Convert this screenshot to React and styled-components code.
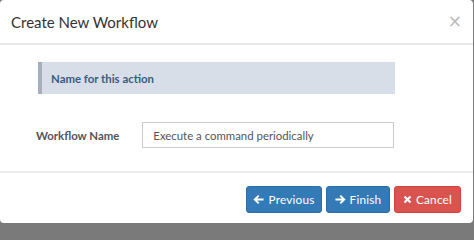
import React from "react";
import styled, { createGlobalStyle } from "styled-components";

const Global = createGlobalStyle`
  html, body { margin: 0; padding: 0; background: #7a7a7a; }
  body { width: 474px; height: 225px; overflow: hidden; font-family: Lato, "Open Sans", sans-serif; }
`;

const Modal = styled.div`
  width: 473px;
  height: 223px;
  background: #fff;
  border-radius: 4px;
  display: flex;
  flex-direction: column;
  box-sizing: border-box;
`;

const Header = styled.div`
  height: 45px;
  box-sizing: border-box;
  border-bottom: 2px solid #e8e8e8;
  display: flex;
  align-items: center;
  justify-content: space-between;
  padding: 0 11px 0 11px;
`;

const Title = styled.h4`
  margin: 0;
  font-size: 15px;
  font-weight: 400;
  color: #333;
`;

const Close = styled.span`
  font-size: 17px;
  color: #bbb;
  line-height: 1;
  font-family: "DejaVu Sans", sans-serif;
`;

const Body = styled.div`
  flex: 1;
  padding: 17px 78px 0 38px;
  border-bottom: 2px solid #ececec;
`;

const Alert = styled.div`
  height: 32px;
  box-sizing: border-box;
  background: #d8dee7;
  border-left: 4px solid #a5afbd;
  display: flex;
  align-items: center;
  padding-left: 9px;
  font-size: 11.4px;
  font-weight: 700;
  color: #3c5a80;
`;

const FormRow = styled.div`
  display: flex;
  align-items: center;
  margin-top: 28px;
  margin-left: -2px;
`;

const Label = styled.label`
  flex: 0 0 82px;
  white-space: nowrap;
  text-align: right;
  font-size: 11.4px;
  font-weight: 700;
  color: #555;
`;

const Input = styled.div`
  flex: 0 0 252px;
  margin-left: 23px;
  height: 26px;
  box-sizing: border-box;
  border: 1px solid #ccc;
  display: flex;
  align-items: center;
  padding-left: 10px;
  font-size: 11.4px;
  color: #555;
`;

const Footer = styled.div`
  height: 50px;
  display: flex;
  justify-content: flex-end;
  align-items: flex-start;
  padding: 13px 12px 0 0;
  box-sizing: border-box;
  gap: 4px;
`;

const Button = styled.button`
  height: 27px;
  width: ${(p) => p.w}px;
  border: 1px solid ${(p) => (p.danger ? "#d43f3a" : "#2e6da4")};
  background: ${(p) => (p.danger ? "#d9534f" : "#337ab7")};
  color: #fff;
  border-radius: 3px;
  font-family: Lato, "Open Sans", sans-serif;
  font-size: 11.8px;
  letter-spacing: 0.2px;
  display: flex;
  align-items: center;
  justify-content: center;
  gap: 4px;
  padding: 0;
`;

const Icon = styled.svg`
  width: ${(p) => p.size || 11}px;
  height: ${(p) => p.size || 11}px;
  fill: #fff;
`;

const ArrowLeft = () => (
  <Icon viewBox="0 0 12 12">
    <path d="M0.5 6 L5.5 1 L7 2.5 L4.5 5 L11.5 5 L11.5 7 L4.5 7 L7 9.5 L5.5 11 Z" />
  </Icon>
);
const ArrowRight = () => (
  <Icon viewBox="0 0 12 12">
    <path d="M11.5 6 L6.5 1 L5 2.5 L7.5 5 L0.5 5 L0.5 7 L7.5 7 L5 9.5 L6.5 11 Z" />
  </Icon>
);
const XIcon = () => (
  <Icon viewBox="0 0 12 12" size={9}>
    <path d="M1 3 L3 1 L6 4 L9 1 L11 3 L8 6 L11 9 L9 11 L6 8 L3 11 L1 9 L4 6 Z" />
  </Icon>
);

export default function App() {
  return (
    <>
      <Global />
      <Modal>
        <Header>
          <Title>Create New Workflow</Title>
          <Close>×</Close>
        </Header>
        <Body>
          <Alert>Name for this action</Alert>
          <FormRow>
            <Label>Workflow Name</Label>
            <Input>Execute a command periodically</Input>
          </FormRow>
        </Body>
        <Footer>
          <Button w={76}>
            <ArrowLeft />
            Previous
          </Button>
          <Button w={64}>
            <ArrowRight />
            Finish
          </Button>
          <Button w={67} danger>
            <XIcon />
            Cancel
          </Button>
        </Footer>
      </Modal>
    </>
  );
}
